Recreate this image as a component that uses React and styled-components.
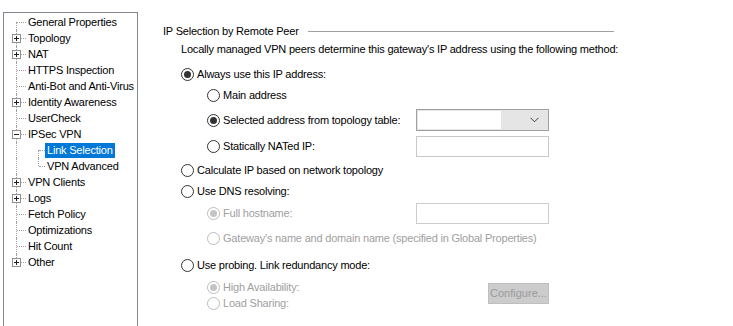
import React from 'react';
import styled, { createGlobalStyle, css } from 'styled-components';

const GlobalStyle = createGlobalStyle`
  html, body {
    margin: 0;
    padding: 0;
    background: #ffffff;
  }
  body {
    font-family: 'Liberation Sans', Arial, sans-serif;
    font-size: 11px;
    letter-spacing: -0.2px;
    color: #000000;
  }
`;

const treeItems = [
  { label: 'General Properties', pos: 'first' },
  { label: 'Topology', expander: '+' },
  { label: 'NAT', expander: '+' },
  { label: 'HTTPS Inspection' },
  { label: 'Anti-Bot and Anti-Virus' },
  { label: 'Identity Awareness', expander: '+' },
  { label: 'UserCheck' },
  { label: 'IPSec VPN', expander: '-', open: true },
  { label: 'Link Selection', child: 'first', selected: true },
  { label: 'VPN Advanced', child: 'last' },
  { label: 'VPN Clients', expander: '+' },
  { label: 'Logs', expander: '+' },
  { label: 'Fetch Policy' },
  { label: 'Optimizations' },
  { label: 'Hit Count' },
  { label: 'Other', expander: '+', pos: 'last' },
];

function Tree() {
  return (
    <TreePanel>
      {treeItems.map((item) => (
        <TreeRow key={item.label}>
          <Gutter $pos={item.child ? 'pass' : item.pos} $stub={!item.child}>
            {item.expander && <Expander>{item.expander === '+' ? <PlusIcon /> : <MinusIcon />}</Expander>}
          </Gutter>
          {item.child && <Gutter $pos={item.child} $stub $narrow />}
          <TreeLabel $selected={item.selected}>{item.label}</TreeLabel>
        </TreeRow>
      ))}
    </TreePanel>
  );
}

function PlusIcon() {
  return (
    <svg width="9" height="9" viewBox="0 0 9 9">
      <rect x="0.5" y="0.5" width="8" height="8" fill="#fff" stroke="#919191" />
      <path d="M2 4.5h5M4.5 2v5" stroke="#1e1e1e" />
    </svg>
  );
}

function MinusIcon() {
  return (
    <svg width="9" height="9" viewBox="0 0 9 9">
      <rect x="0.5" y="0.5" width="8" height="8" fill="#fff" stroke="#919191" />
      <path d="M2 4.5h5" stroke="#1e1e1e" />
    </svg>
  );
}

function Radio({ checked, disabled, children }) {
  return (
    <RadioLabel $disabled={disabled}>
      <RadioCircle $checked={checked} $disabled={disabled} />
      <span>{children}</span>
    </RadioLabel>
  );
}

function ChevronDown() {
  return (
    <svg width="9" height="6" viewBox="0 0 9 6">
      <path d="M0.5 0.8 L4.5 4.8 L8.5 0.8" fill="none" stroke="#444" strokeWidth="1" />
    </svg>
  );
}

export default function App() {
  return (
    <>
      <GlobalStyle />
      <Page>
        <Tree />
        <Content>
          <GroupHeader>
            <span>IP Selection by Remote Peer</span>
            <HeaderRule />
          </GroupHeader>
          <Description>
            Locally managed VPN peers determine this gateway's IP address using the following method:
          </Description>

          <OptionRow $top={7}>
            <Radio checked>Always use this IP address:</Radio>
          </OptionRow>
          <OptionRow $top={1} $indent>
            <Radio>Main address</Radio>
          </OptionRow>
          <OptionRow $top={5} $indent>
            <FieldLabel>
              <Radio checked>Selected address from topology table:</Radio>
            </FieldLabel>
            <Combo>
              <ComboText />
              <ChevronDown />
            </Combo>
          </OptionRow>
          <OptionRow $top={6} $indent>
            <FieldLabel>
              <Radio>Statically NATed IP:</Radio>
            </FieldLabel>
            <TextField />
          </OptionRow>
          <OptionRow $top={4}>
            <Radio>Calculate IP based on network topology</Radio>
          </OptionRow>
          <OptionRow $top={1}>
            <Radio>Use DNS resolving:</Radio>
          </OptionRow>
          <OptionRow $top={2} $indent>
            <FieldLabel>
              <Radio checked disabled>Full hostname:</Radio>
            </FieldLabel>
            <TextField $disabled />
          </OptionRow>
          <OptionRow $top={5} $indent>
            <Radio disabled>Gateway's name and domain name (specified in Global Properties)</Radio>
          </OptionRow>
          <OptionRow $top={7}>
            <Radio>Use probing. Link redundancy mode:</Radio>
          </OptionRow>
          <ProbeGroup>
            <ProbeOptions>
              <CompactRow>
                <Radio checked disabled>High Availability:</Radio>
              </CompactRow>
              <CompactRow>
                <Radio disabled>Load Sharing:</Radio>
              </CompactRow>
            </ProbeOptions>
            <ConfigureButton disabled>Configure...</ConfigureButton>
          </ProbeGroup>
        </Content>
      </Page>
    </>
  );
}

const Page = styled.div`
  display: flex;
  width: 733px;
  height: 326px;
  overflow: hidden;
`;

const TreePanel = styled.div`
  margin: 12px 0 0 3px;
  width: 133px;
  height: 314px;
  border: 1px solid #828790;
  border-bottom: none;
  padding-top: 1px;
  box-sizing: content-box;
`;

const TreeRow = styled.div`
  display: flex;
  align-items: center;
  height: 16px;
`;

const dotted = '#a0a0a0';

const Gutter = styled.div`
  position: relative;
  flex: none;
  width: ${(p) => (p.$narrow ? '19px' : '22px')};
  height: 16px;

  &::before {
    content: '';
    position: absolute;
    left: 12px;
    border-left: 1px dotted ${dotted};
    ${(p) =>
      p.$pos === 'first'
        ? css`top: 8px; bottom: 0;`
        : p.$pos === 'last'
        ? css`top: 0; height: 8px;`
        : css`top: 0; bottom: 0;`}
  }

  ${(p) =>
    p.$stub &&
    css`
      &::after {
        content: '';
        position: absolute;
        left: 13px;
        right: 0;
        top: 8px;
        border-top: 1px dotted ${dotted};
      }
    `}
`;

const Expander = styled.span`
  position: absolute;
  left: 8px;
  top: 4px;
  z-index: 1;
  display: flex;
  width: 9px;
  height: 9px;
`;

const TreeLabel = styled.span`
  padding: 0 2px;
  line-height: 15px;
  white-space: nowrap;
  ${(p) =>
    p.$selected &&
    css`
      background: #0078d7;
      color: #ffffff;
    `}
`;

const Content = styled.div`
  margin-left: 25px;
  padding-top: 23px;
  display: flex;
  flex-direction: column;
`;

const GroupHeader = styled.div`
  display: flex;
  align-items: center;
  height: 16px;
  width: 451px;
  gap: 9px;
  white-space: nowrap;
`;

const HeaderRule = styled.div`
  flex: 1;
  border-top: 1px solid #a0a0a0;
`;

const Description = styled.div`
  margin-top: 2px;
  padding-left: 18px;
  height: 16px;
  line-height: 16px;
  white-space: nowrap;
`;

const OptionRow = styled.div`
  display: flex;
  align-items: center;
  height: 20px;
  margin-top: ${(p) => p.$top}px;
  padding-left: ${(p) => (p.$indent ? '44px' : '18px')};
`;

const CompactRow = styled.div`
  display: flex;
  align-items: center;
  height: 16px;
`;

const FieldLabel = styled.div`
  width: 209px;
  flex: none;
`;

const RadioLabel = styled.label`
  display: flex;
  align-items: center;
  gap: 3px;
  white-space: nowrap;
  color: ${(p) => (p.$disabled ? '#a0a0a0' : '#000000')};
`;

const RadioCircle = styled.span`
  flex: none;
  box-sizing: border-box;
  width: 13px;
  height: 13px;
  border-radius: 50%;
  border: 1px solid ${(p) => (p.$disabled ? '#bcbcbc' : '#333333')};
  background: #ffffff;
  display: flex;
  align-items: center;
  justify-content: center;

  &::after {
    content: '';
    width: 7px;
    height: 7px;
    border-radius: 50%;
    background: ${(p) => (p.$disabled ? '#c4c4c4' : '#333333')};
    display: ${(p) => (p.$checked ? 'block' : 'none')};
  }
`;

const Combo = styled.div`
  box-sizing: border-box;
  width: 133px;
  height: 22px;
  border: 1px solid #a0a0a0;
  background: #e5e5e5;
  display: flex;
  align-items: center;
  padding: 1px 9px 1px 1px;
  gap: 29px;
`;

const ComboText = styled.div`
  width: 83px;
  height: 18px;
  background: #ffffff;
`;

const TextField = styled.div`
  box-sizing: border-box;
  width: 133px;
  height: 21px;
  border: 1px solid ${(p) => (p.$disabled ? '#cccccc' : '#c8c8c8')};
  background: #ffffff;
`;

const ProbeGroup = styled.div`
  display: flex;
  align-items: center;
  margin-top: 4px;
  padding-left: 44px;
`;

const ProbeOptions = styled.div`
  display: flex;
  flex-direction: column;
  width: 281px;
`;

const ConfigureButton = styled.button`
  box-sizing: border-box;
  width: 61px;
  height: 21px;
  margin-top: -4px;
  padding: 0;
  font: inherit;
  color: #9a9a9a;
  background: #cccccc;
  border: 1px solid #bfbfbf;
`;
